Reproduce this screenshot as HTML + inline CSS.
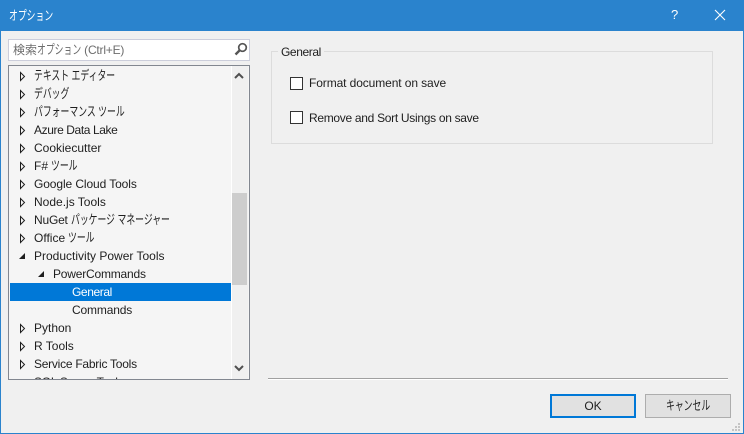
<!DOCTYPE html>
<html><head><meta charset="utf-8">
<style>
html,body{margin:0;padding:0;width:744px;height:434px;overflow:hidden;background:#f0f0f0}
body{position:relative;font-family:"Liberation Sans","Noto Sans CJK JP",sans-serif;font-size:12px;color:#1e1e1e}
div{position:absolute;box-sizing:border-box}
.t{white-space:nowrap;line-height:18px;height:18px}
.row{left:25px;white-space:nowrap;line-height:18px;height:18px}
.k{display:inline-block;white-space:nowrap;font-size:13px;letter-spacing:0;line-height:18px;transform:scaleX(.68);transform-origin:0 50%}
svg{position:absolute}
</style></head><body>
<div style="left:0;top:0;width:744px;height:434px;border:1px solid #2a83cd"></div>
<div style="left:0;top:0;width:744px;height:31px;background:#2a83cd"></div>
<div class="t" style="left:9px;top:7px;color:#fff"><span class="k" style="width:44px">オプション</span></div>
<div class="t" style="left:671px;top:6px;color:#fff;font-size:13px">?</div>
<svg style="left:714px;top:9px" width="12" height="12" viewBox="0 0 12 12"><path d="M1 1L11 11M11 1L1 11" stroke="#fff" stroke-width="1.1" fill="none"/></svg>

<div style="left:8px;top:39px;width:242px;height:22px;background:#fff;border:1px solid #ccceDB"></div>
<div class="t" style="left:13px;top:41px;color:#6d6d6d;letter-spacing:-.2px"><span style="letter-spacing:0">検索</span><span class="k" style="width:44px">オプション</span> (Ctrl+E)</div>
<svg style="left:234px;top:42px" width="14" height="14" viewBox="0 0 14 14"><circle cx="8.500" cy="5.500" r="3.800" stroke="#555" stroke-width="1.700" fill="none"/><path d="M5.500 8.500L1.500 12.500" stroke="#555" stroke-width="2.400"/></svg>

<div style="left:8px;top:65px;width:242px;height:315px;background:#f5f5f5;border:1px solid #828790;overflow:hidden">
 <div style="left:222px;top:0;width:17px;height:313px;background:#f0f0f0;border-left:1px solid #fff"></div>
 <div style="left:223px;top:127px;width:15px;height:92px;background:#cdcdcd"></div>
 <div style="left:1px;top:217px;width:221px;height:18px;background:#0078d7"></div>
 <div class="row" style="top:1px"><span class="k" style="width:81px">テキスト エディター</span></div>
 <div class="row" style="top:19px"><span class="k" style="width:37px">デバッグ</span></div>
 <div class="row" style="top:37px"><span class="k" style="width:91px">パフォーマンス ツール</span></div>
 <div class="row" style="top:55px;letter-spacing:-.4px">Azure Data Lake</div>
 <div class="row" style="top:73px">Cookiecutter</div>
 <div class="row" style="top:91px">F# <span class="k" style="width:27px">ツール</span></div>
 <div class="row" style="top:109px;letter-spacing:-.1px">Google Cloud Tools</div>
 <div class="row" style="top:127px">Node.js Tools</div>
 <div class="row" style="top:145px;letter-spacing:-.2px">NuGet <span class="k" style="width:100px">パッケージ マネージャー</span></div>
 <div class="row" style="top:163px">Office <span class="k" style="width:27px">ツール</span></div>
 <div class="row" style="top:181px">Productivity Power Tools</div>
 <div class="row" style="left:44px;top:199px;letter-spacing:-.2px">PowerCommands</div>
 <div class="row" style="left:63px;top:217px;color:#fff;letter-spacing:-.4px">General</div>
 <div class="row" style="left:63px;top:235px;letter-spacing:-.15px">Commands</div>
 <div class="row" style="top:253px">Python</div>
 <div class="row" style="top:271px">R Tools</div>
 <div class="row" style="top:289px;letter-spacing:-.25px">Service Fabric Tools</div>
 <div class="row" style="top:307px;letter-spacing:-.25px">SQL Server Tools</div>
 <svg style="left:0;top:0" width="40" height="313" viewBox="0 0 40 313" fill="none" stroke="#1e1e1e" stroke-width="1">
  <path d="M11.500 6.500V14.500L15.500 10.500Z"/><path d="M11.500 24.500V32.500L15.500 28.500Z"/><path d="M11.500 42.500V50.500L15.500 46.500Z"/><path d="M11.500 60.500V68.500L15.500 64.500Z"/><path d="M11.500 78.500V86.500L15.500 82.500Z"/><path d="M11.500 96.500V104.500L15.500 100.500Z"/><path d="M11.500 114.500V122.500L15.500 118.500Z"/><path d="M11.500 132.500V140.500L15.500 136.500Z"/><path d="M11.500 150.500V158.500L15.500 154.500Z"/><path d="M11.500 168.500V176.500L15.500 172.500Z"/>
  <path d="M11.500 258.500V266.500L15.500 262.500Z"/><path d="M11.500 276.500V284.500L15.500 280.500Z"/><path d="M11.500 294.500V302.500L15.500 298.500Z"/>
  <path d="M10 193H16V187Z" fill="#1e1e1e" stroke="none"/>
  <path d="M29 211H35V205Z" fill="#1e1e1e" stroke="none"/>
 </svg>
 <svg style="left:223px;top:0" width="15" height="313" viewBox="0 0 15 313" fill="none" stroke="#505050" stroke-width="2"><path d="M3 12L7 8L11 12"/><path d="M3 300L7 304L11 300"/></svg>
</div>

<div style="left:271px;top:51px;width:442px;height:93px;border:1px solid #dcdcdc"></div>
<div class="t" style="left:278px;top:43px;background:#f0f0f0;padding:0 3px;letter-spacing:-.4px">General</div>
<div style="left:290px;top:77px;width:13px;height:13px;background:#fff;border:1px solid #333"></div>
<div class="t" style="left:309px;top:74px;letter-spacing:-.1px">Format document on save</div>
<div style="left:290px;top:111px;width:13px;height:13px;background:#fff;border:1px solid #333"></div>
<div class="t" style="left:309px;top:109px;letter-spacing:-.3px">Remove and Sort Usings on save</div>

<div style="left:268px;top:378px;width:460px;height:1px;background:#a0a0a0"></div>
<div style="left:268px;top:379px;width:460px;height:1px;background:#fff"></div>

<div style="left:550px;top:394px;width:86px;height:24px;background:#e1e1e1;border:2px solid #0078d7;text-align:center;line-height:20px">OK</div>
<div style="left:645px;top:394px;width:86px;height:24px;background:#e1e1e1;border:1px solid #adadad;line-height:22px;padding-left:20px"><span class="k" style="width:45px;line-height:22px">キャンセル</span></div>
<svg style="left:732px;top:423px" width="8" height="8" viewBox="0 0 8 8" fill="#c4c4c4"><rect x="6" y="0" width="2" height="2"/><rect x="3" y="3" width="2" height="2"/><rect x="6" y="3" width="2" height="2"/><rect x="0" y="6" width="2" height="2"/><rect x="3" y="6" width="2" height="2"/><rect x="6" y="6" width="2" height="2"/></svg>
</body></html>
